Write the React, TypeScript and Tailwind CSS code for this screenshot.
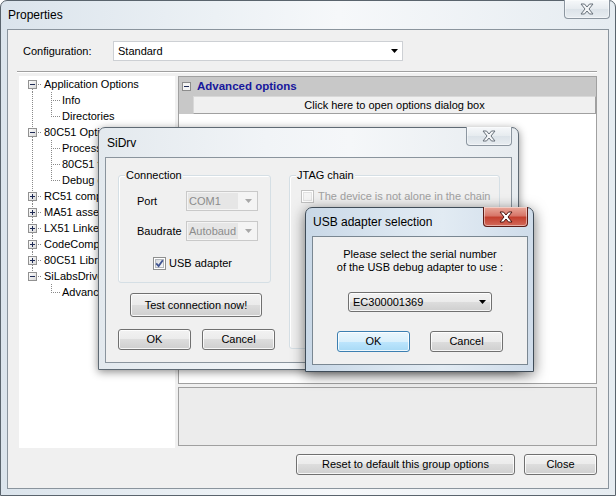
import React from "react";
import clsx from "clsx";

type TreeNode = { t: string; lvl: 0 | 1; exp?: boolean; last?: boolean; first?: boolean; lastRoot?: boolean };

const tree: TreeNode[] = [
  { t: "Application Options", lvl: 0, exp: true, first: true },
  { t: "Info", lvl: 1 },
  { t: "Directories", lvl: 1, last: true },
  { t: "80C51 Options", lvl: 0, exp: true },
  { t: "Processor", lvl: 1 },
  { t: "80C51 target", lvl: 1 },
  { t: "Debug options", lvl: 1, last: true },
  { t: "RC51 compiler", lvl: 0 },
  { t: "MA51 assembler", lvl: 0 },
  { t: "LX51 Linker", lvl: 0 },
  { t: "CodeCompressor", lvl: 0 },
  { t: "80C51 Library", lvl: 0 },
  { t: "SiLabsDriver", lvl: 0, exp: true, lastRoot: true },
  { t: "Advanced", lvl: 1, last: true },
];

const dot = { stroke: "#8a8a8a", strokeDasharray: "1 1", strokeWidth: 1 };

function TreeRow({ n, underLastRoot }: { n: TreeNode; underLastRoot: boolean }) {
  if (n.lvl === 0) {
    return (
      <div className="flex items-center h-[16px]">
        <svg width="25" height="16" className="shrink-0">
          {!n.first && <line x1="13.5" y1="0" x2="13.5" y2="4" {...dot} />}
          {!n.lastRoot && <line x1="13.5" y1="13" x2="13.5" y2="16" {...dot} />}
          <defs>
            <linearGradient id="bx" x1="0" y1="0" x2="1" y2="1">
              <stop offset="0" stopColor="#ffffff" />
              <stop offset="1" stopColor="#d6d6d6" />
            </linearGradient>
          </defs>
          <rect x="9.5" y="4.5" width="8" height="8" fill="url(#bx)" stroke="#919191" />
          <line x1="11" y1="8.5" x2="16" y2="8.5" stroke="#1f2b55" />
          {!n.exp && <line x1="13.5" y1="6" x2="13.5" y2="11" stroke="#1f2b55" />}
          <line x1="19" y1="8.5" x2="23" y2="8.5" {...dot} />
        </svg>
        <span className="whitespace-nowrap">{n.t}</span>
      </div>
    );
  }
  return (
    <div className="flex items-center h-[16px]">
      <svg width="43" height="16" className="shrink-0">
        {!underLastRoot && <line x1="13.5" y1="0" x2="13.5" y2="16" {...dot} />}
        <line x1="32.5" y1="0" x2="32.5" y2={n.last ? 9 : 16} {...dot} />
        <line x1="34" y1="8.5" x2="42" y2="8.5" {...dot} />
      </svg>
      <span className="whitespace-nowrap">{n.t}</span>
    </div>
  );
}

function CloseGlyph({ active }: { active?: boolean }) {
  return (
    <svg width="14" height="12" viewBox="0 0 14 12">
      <polygon
        points="1,1 4.5,1 7,4 9.5,1 13,1 9,6 13,11 9.5,11 7,8 4.5,11 1,11 5,6"
        fill={active ? "#ffffff" : "#f3f5f7"}
        stroke={active ? "#4a1510" : "#68717a"}
        strokeWidth="1"
        strokeLinejoin="round"
      />
    </svg>
  );
}

function CloseBtn({ active, className }: { active?: boolean; className?: string }) {
  return (
    <div
      className={clsx(
        "flex items-center justify-center rounded-b-[4px] border border-t-0 shadow-[inset_0_0_0_1px_rgba(255,255,255,0.45)]",
        active
          ? "border-[#5b1b16] bg-[linear-gradient(#e9a99b,#d8776a_45%,#c4402f_55%,#d26a5b)]"
          : "border-[#8c96a0] bg-[linear-gradient(#f6f8fa,#e6ebef_50%,#dbe2e8_50%,#e8edf1)]",
        className
      )}
    >
      <CloseGlyph active={active} />
    </div>
  );
}

function Btn({ children, className, def }: { children: React.ReactNode; className?: string; def?: boolean }) {
  return (
    <button
      type="button"
      className={clsx(
        "flex items-center justify-center rounded-[3px] border shadow-[inset_0_0_0_1px_rgba(255,255,255,0.8)] leading-none",
        def
          ? "border-[#3c7fb1] bg-[linear-gradient(#eaf6fd,#d9f0fc_50%,#bee6fd_50%,#a7d9f5)]"
          : "border-[#707070] bg-[linear-gradient(#f2f2f2,#ebebeb_50%,#dddddd_50%,#cfcfcf)]",
        className
      )}
    >
      {children}
    </button>
  );
}

function Arrow({ color = "#000" }: { color?: string }) {
  return (
    <svg width="7" height="4" viewBox="0 0 7 4" className="shrink-0">
      <path d="M0 0h7L3.5 4z" fill={color} />
    </svg>
  );
}

function Check({ checked, disabled }: { checked?: boolean; disabled?: boolean }) {
  return (
    <svg width="13" height="13" viewBox="0 0 13 13" className="shrink-0">
      <defs>
        <linearGradient id="ck" x1="0" y1="0" x2="1" y2="1">
          <stop offset="0" stopColor="#d5d8dc" />
          <stop offset="1" stopColor="#fafafa" />
        </linearGradient>
      </defs>
      <rect x="0.5" y="0.5" width="12" height="12" fill="#fff" stroke={disabled ? "#c2c2c2" : "#8e8f8f"} />
      <rect x="2.5" y="2.5" width="8" height="8" fill={disabled ? "#f4f4f4" : "url(#ck)"} stroke={disabled ? "#e2e2e2" : "#b4b8bd"} />
      {checked && <path d="M3.2 6.4 5.6 9 9.8 3.2" fill="none" stroke="#3f5391" strokeWidth="1.8" />}
    </svg>
  );
}

function DisabledCombo({ value }: { value: string }) {
  return (
    <div className="w-[72px] h-[20px] border border-[#c9c9c9] bg-[#f4f4f4] flex items-center pl-[1px] pr-[5px]">
      <div className="w-[50px] h-[16px] bg-[#e6e6e6] text-[#8c8c8c] pl-[1px] leading-[16px]">{value}</div>
      <div className="ml-auto">
        <Arrow color="#a8a8a8" />
      </div>
    </div>
  );
}

function GroupBox({ label, className, children }: { label: string; className?: string; children?: React.ReactNode }) {
  return (
    <div className={clsx("relative border border-[#d5dfe5] rounded-[3px] shadow-[inset_1px_1px_0_#fff]", className)}>
      <span className="absolute left-[6px] -top-[8px] px-[1px] bg-[#f0f0f0] leading-[14px]">{label}</span>
      {children}
    </div>
  );
}

export default function App() {
  return (
    <div className="relative w-[616px] h-[496px] overflow-hidden bg-white font-['Liberation_Sans',Arial,sans-serif] text-[11px] text-black">
      {/* Properties window */}
      <div className="w-[616px] h-[496px] flex flex-col rounded-t-[7px] border border-[#5a646d] bg-[linear-gradient(90deg,#dbe4ec,#ecf1f5_35%,#f6f8fa_55%,#e6ecf1)]">
        <div className="h-[28px] flex items-start">
          <span className="ml-[7px] mt-[6px] text-[12px] leading-[16px]">Properties</span>
          <CloseBtn className="ml-auto mr-[5px] -mt-px w-[46px] h-[19px]" />
        </div>
        <div className="mx-[6px] mb-[6px] flex-1 border border-[#8a949d] bg-[#f0f0f0] flex flex-col">
          <div className="mt-[11px] flex items-center h-[20px]">
            <span className="ml-[15px] w-[90px]">Configuration:</span>
            <div className="w-[290px] h-[20px] border border-[#cdd0d4] bg-white flex items-center pl-[4px] pr-[4px]">
              <span>Standard</span>
              <div className="ml-auto">
                <Arrow />
              </div>
            </div>
          </div>
          <div className="mt-[10px] ml-[9px] mr-[11px] h-[2px] border-t border-b border-t-[#a0a0a0] border-b-white" />
          <div className="mt-[3px] ml-[11px] flex gap-[3px]">
            <div className="w-[156px] h-[372px] bg-white">
              {tree.map((n, i) => (
                <TreeRow key={i} n={n} underLastRoot={i === tree.length - 1} />
              ))}
            </div>
            <div className="w-[419px] flex flex-col gap-[3px]">
              <div className="h-[308px] border border-[#a0a0a0] bg-white flex flex-col">
                <div className="bg-[#c8c8c8] flex flex-col">
                  <div className="h-[19px] flex items-center">
                    <svg width="9" height="9" className="ml-[3px] shrink-0">
                      <rect x="0.5" y="0.5" width="8" height="8" fill="#f4f4f4" stroke="#8c8c8c" />
                      <line x1="2" y1="4.5" x2="7" y2="4.5" stroke="#1f2b55" />
                    </svg>
                    <span className="ml-[6px] font-bold text-[11.5px] text-[#17179c]">Advanced options</span>
                  </div>
                  <div className="ml-[14px] h-[18px] border border-[#a0a0a0] border-t-[#d8d8d8] border-l-[#d8d8d8] bg-[#f0f0f0] flex items-center justify-center">
                    Click here to open options dialog box
                  </div>
                </div>
              </div>
              <div className="h-[59px] border border-[#a0a0a0] bg-[#ececec]" />
            </div>
          </div>
          <div className="mt-[6px] mr-[11px] flex justify-end gap-[9px]">
            <Btn className="w-[219px] h-[21px]">Reset to default this group options</Btn>
            <Btn className="w-[73px] h-[21px]">Close</Btn>
          </div>
        </div>
      </div>

      {/* SiDrv dialog */}
      <div className="absolute left-[98px] top-[127px] w-[421px] h-[243px] flex flex-col rounded-t-[7px] border border-[#5f6a74] bg-[linear-gradient(90deg,#e3e9ee,#f1f4f7_40%,#f5f7f9_60%,#e7ecf0)] shadow-[0_2px_9px_rgba(0,0,0,0.45)]">
        <div className="h-[29px] flex items-start">
          <span className="ml-[8px] mt-[7px] text-[12px] leading-[16px]">SiDrv</span>
          <CloseBtn className="ml-auto mr-[6px] -mt-px w-[46px] h-[19px]" />
        </div>
        <div className="mx-[6px] mb-[6px] flex-1 border border-[#8a949d] bg-[#f0f0f0] flex pl-[12px] pt-[17px]">
          <div className="w-[157px] flex flex-col">
            <GroupBox label="Connection" className="w-[153px] h-[108px]">
              <div className="mt-[15px] flex items-center h-[20px]">
                <span className="ml-[18px] w-[49px]">Port</span>
                <DisabledCombo value="COM1" />
              </div>
              <div className="mt-[10px] flex items-center h-[20px]">
                <span className="ml-[18px] w-[49px]">Baudrate</span>
                <DisabledCombo value="Autobaud" />
              </div>
              <div className="mt-[16px] ml-[34px] flex items-center h-[13px]">
                <Check checked />
                <span className="ml-[3px] leading-[13px]">USB adapter</span>
              </div>
            </GroupBox>
            <Btn className="mt-[10px] ml-[12px] w-[132px] h-[24px]">Test connection now!</Btn>
            <div className="mt-[12px] flex gap-[11px]">
              <Btn className="w-[73px] h-[21px]">OK</Btn>
              <Btn className="w-[73px] h-[21px]">Cancel</Btn>
            </div>
          </div>
          <GroupBox label="JTAG chain" className="ml-[14px] w-[211px] h-[174px]">
            <div className="mt-[14px] ml-[11px] flex items-center h-[13px]">
              <Check disabled />
              <span className="ml-[4px] leading-[13px] text-[#a0a0a0] whitespace-nowrap">The device is not alone in the chain</span>
            </div>
          </GroupBox>
        </div>
      </div>

      {/* USB adapter selection dialog */}
      <div className="absolute left-[305px] top-[207px] w-[229px] h-[165px] flex flex-col rounded-t-[7px] border border-[#3f4c58] bg-[linear-gradient(90deg,#c9d8e7,#dbe6f0_40%,#e2ebf3_60%,#cfdcea)] shadow-[0_3px_14px_rgba(0,0,0,0.55)]">
        <div className="h-[28px] flex items-start">
          <span className="ml-[7px] mt-[6px] text-[12px] leading-[16px]">USB adapter selection</span>
          <CloseBtn active className="ml-auto mr-[5px] -mt-px w-[45px] h-[20px]" />
        </div>
        <div className="ml-[6px] mr-[5px] mb-[6px] flex-1 border border-[#7a8792] bg-[#f0f0f0] flex flex-col items-center">
          <div className="mt-[11px] text-center leading-[13px]">
            <div>Please select the serial number</div>
            <div>of the USB debug adapter to use :</div>
          </div>
          <div className="mt-[18px] w-[144px] h-[20px] rounded-[3px] border border-[#707070] bg-[linear-gradient(#f2f2f2,#ebebeb_50%,#dddddd_50%,#cfcfcf)] shadow-[inset_0_0_0_1px_rgba(255,255,255,0.8)] flex items-center pl-[4px] pr-[5px]">
            <span>EC300001369</span>
            <div className="ml-auto">
              <Arrow />
            </div>
          </div>
          <div className="mt-[19px] flex gap-[20px]">
            <Btn def className="w-[73px] h-[21px]">OK</Btn>
            <Btn className="w-[73px] h-[21px]">Cancel</Btn>
          </div>
        </div>
      </div>
    </div>
  );
}
